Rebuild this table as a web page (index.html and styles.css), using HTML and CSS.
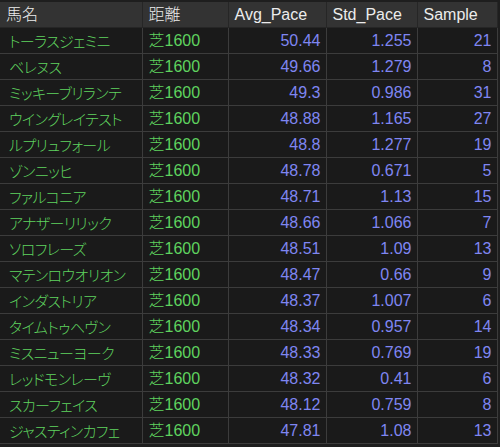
FILE: index.html
```html
<!DOCTYPE html>
<html lang="ja">
<head>
<meta charset="utf-8">
<link rel="stylesheet" href="styles.css">
</head>
<body>
<table class="grid">
  <colgroup>
    <col class="c-name"><col class="c-dist"><col class="c-avg"><col class="c-std"><col class="c-n">
  </colgroup>
  <thead>
    <tr><th>馬名</th><th>距離</th><th>Avg_Pace</th><th>Std_Pace</th><th>Sample</th></tr>
  </thead>
  <tbody>
    <tr><td class="name">トーラスジェミニ</td><td class="dist">芝1600</td><td class="num">50.44</td><td class="num">1.255</td><td class="num">21</td></tr>
    <tr><td class="name">ベレヌス</td><td class="dist">芝1600</td><td class="num">49.66</td><td class="num">1.279</td><td class="num">8</td></tr>
    <tr><td class="name">ミッキーブリランテ</td><td class="dist">芝1600</td><td class="num">49.3</td><td class="num">0.986</td><td class="num">31</td></tr>
    <tr><td class="name">ウイングレイテスト</td><td class="dist">芝1600</td><td class="num">48.88</td><td class="num">1.165</td><td class="num">27</td></tr>
    <tr><td class="name">ルプリュフォール</td><td class="dist">芝1600</td><td class="num">48.8</td><td class="num">1.277</td><td class="num">19</td></tr>
    <tr><td class="name">ゾンニッヒ</td><td class="dist">芝1600</td><td class="num">48.78</td><td class="num">0.671</td><td class="num">5</td></tr>
    <tr><td class="name">ファルコニア</td><td class="dist">芝1600</td><td class="num">48.71</td><td class="num">1.13</td><td class="num">15</td></tr>
    <tr><td class="name">アナザーリリック</td><td class="dist">芝1600</td><td class="num">48.66</td><td class="num">1.066</td><td class="num">7</td></tr>
    <tr><td class="name">ソロフレーズ</td><td class="dist">芝1600</td><td class="num">48.51</td><td class="num">1.09</td><td class="num">13</td></tr>
    <tr><td class="name">マテンロウオリオン</td><td class="dist">芝1600</td><td class="num">48.47</td><td class="num">0.66</td><td class="num">9</td></tr>
    <tr><td class="name">インダストリア</td><td class="dist">芝1600</td><td class="num">48.37</td><td class="num">1.007</td><td class="num">6</td></tr>
    <tr><td class="name">タイムトゥヘヴン</td><td class="dist">芝1600</td><td class="num">48.34</td><td class="num">0.957</td><td class="num">14</td></tr>
    <tr><td class="name">ミスニューヨーク</td><td class="dist">芝1600</td><td class="num">48.33</td><td class="num">0.769</td><td class="num">19</td></tr>
    <tr><td class="name">レッドモンレーヴ</td><td class="dist">芝1600</td><td class="num">48.32</td><td class="num">0.41</td><td class="num">6</td></tr>
    <tr><td class="name">スカーフェイス</td><td class="dist">芝1600</td><td class="num">48.12</td><td class="num">0.759</td><td class="num">8</td></tr>
    <tr><td class="name">ジャスティンカフェ</td><td class="dist">芝1600</td><td class="num">47.81</td><td class="num">1.08</td><td class="num">13</td></tr>
  </tbody>
</table>
</body>
</html>
```
FILE: styles.css
```css
html, body {
  margin: 0;
  padding: 0;
  background: #1e1e1e;
}
body {
  padding-top: 2px;
  font-family: "Liberation Sans", "Noto Sans CJK JP", sans-serif;
  font-size: 16px;
}
.grid {
  border-collapse: collapse;
  table-layout: fixed;
  width: 497px;
  background: #1a1a1a;
}
.c-name { width: 142px; }
.c-dist { width: 86px; }
.c-avg { width: 98px; }
.c-std { width: 91px; }
.c-n { width: 80px; }
.grid th, .grid td {
  height: 25px;
  padding: 0 5px 0 6px;
  border-right: 1px solid #3c3c3c;
  border-bottom: 1px solid #3c3c3c;
  white-space: nowrap;
  overflow: hidden;
  line-height: 25px;
}
.grid th {
  background: #333333;
  color: #ececec;
  font-weight: 300;
  text-align: left;
  border-right: 1px solid #262626;
  border-bottom: 1px solid #262626;
}
.name {
  color: #5fd35f;
  font-family: "Noto Sans CJK JP", sans-serif;
  font-feature-settings: "palt";
  font-size: 15px;
  font-weight: 300;
  letter-spacing: -0.6px;
}
.grid .name {
  padding-left: 9px;
}
.dist {
  color: #5fd35f;
  font-weight: 300;
}
.num {
  color: #7f86f2;
  text-align: right;
}
```
